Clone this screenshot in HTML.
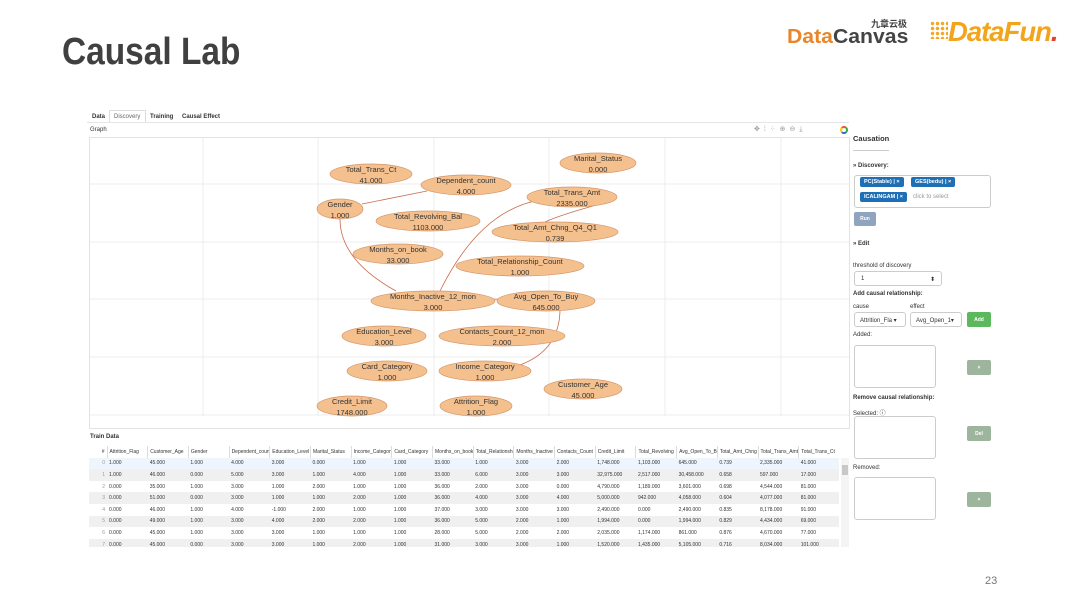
<!DOCTYPE html>
<html><head><meta charset="utf-8"><style>
*{margin:0;padding:0;box-sizing:border-box}
body{width:1080px;height:608px;background:#fff;font-family:"Liberation Sans","DejaVu Sans",sans-serif;position:relative;overflow:hidden;color:#333}
.abs{position:absolute}
.t{font-size:6px;white-space:nowrap}
table{border-collapse:collapse}
td{font-size:5px;height:11.6px;padding:0 2px;white-space:nowrap;overflow:hidden;width:40.7px;max-width:40.7px}
.tag{position:absolute;background:#1f6fb5;color:#fff;font-size:5.5px;font-weight:bold;height:10px;line-height:10px;padding:0 4px;border-radius:2px;white-space:nowrap}
.box{position:absolute;border:1px solid #ccc;border-radius:3px;background:#fff}
.btn{position:absolute;color:#fff;font-size:5px;font-weight:bold;border-radius:2px;display:flex;align-items:center;justify-content:center}
</style></head><body>
<div class="abs" style="left:62px;top:31px;font-size:38px;font-weight:bold;color:#404040;transform:scaleX(0.88);transform-origin:0 0">Causal Lab</div>
<div class="abs" style="left:871px;top:17px;font-size:9px;font-weight:bold;color:#444;font-family:'Noto Sans CJK SC',sans-serif">九章云极</div>
<div class="abs" style="left:787px;top:26px;font-size:20px;font-weight:bold;color:#e8862a;transform:scaleX(1.06);transform-origin:0 0">Data<span style="color:#444">Canvas</span></div>
<div class="abs" style="left:930px;top:21px;width:18px;height:18px;background:radial-gradient(circle,#f5a623 1.5px,transparent 2px) 0 0/5px 5px"></div>
<div class="abs" style="left:948px;top:16px;font-size:28px;font-weight:bold;font-style:italic;color:#f2a51c;letter-spacing:-1px;transform:scaleX(0.98);transform-origin:0 0">DataFun<span style="color:#e0432b">.</span></div>

<div class="abs t" style="left:92px;top:114px;font-weight:bold">Data</div>
<div class="abs" style="left:109px;top:110px;width:37px;height:12px;border:1px solid #ddd;border-bottom:none;background:#fff"></div>
<div class="abs t" style="left:114px;top:114px;color:#666">Discovery</div>
<div class="abs t" style="left:150px;top:114px;font-weight:bold">Training</div>
<div class="abs t" style="left:182px;top:114px;font-weight:bold">Causal Effect</div>
<div class="abs" style="left:87px;top:122px;width:762px;height:1px;background:#e5e5e5"></div>
<div class="abs t" style="left:90px;top:127px">Graph</div>
<div class="abs" style="left:754px;top:125px;font-size:7px;color:#999;letter-spacing:4px">✥⁞⁘⊕⊖⤓</div>
<div class="abs" style="left:840px;top:126px;width:8px;height:8px;border-radius:50%;border:2px solid;border-color:#e53 #3a3 #36c #fc0"></div>

<svg class="abs" style="left:0;top:0" width="1080" height="608">
<rect x="89.5" y="137.5" width="760" height="291" fill="#fff" stroke="#e3e3e3"/>
<g stroke="#ececec">
<line x1="203" y1="138" x2="203" y2="416"/><line x1="318" y1="138" x2="318" y2="416"/><line x1="434" y1="138" x2="434" y2="416"/><line x1="549" y1="138" x2="549" y2="416"/><line x1="665" y1="138" x2="665" y2="416"/><line x1="781" y1="138" x2="781" y2="416"/>
<line x1="90" y1="184" x2="849" y2="184"/><line x1="90" y1="242" x2="849" y2="242"/><line x1="90" y1="299" x2="849" y2="299"/><line x1="90" y1="357" x2="849" y2="357"/><line x1="90" y1="415" x2="849" y2="415"/>
</g>
<g stroke="#c96a4a" fill="none" stroke-width="0.8">
<path d="M427 191 L362 204"/>
<path d="M396 291 Q340 260 340 219"/>
<path d="M440 291 Q480 210 540 200"/>
<path d="M499 299 L479 300"/>
<path d="M560 309 Q560 350 520 365"/>
<path d="M600 204 Q560 215 545 222"/>
</g>
<g font-size="7.5" text-anchor="middle" fill="#333">
<g fill="#f4c08e" stroke="#d4956a" stroke-width="0.7">
<ellipse cx="371" cy="174" rx="41" ry="10"/><ellipse cx="598" cy="163" rx="38" ry="10"/><ellipse cx="466" cy="185" rx="45" ry="10"/><ellipse cx="572" cy="197" rx="45" ry="10"/><ellipse cx="340" cy="209" rx="23" ry="10"/><ellipse cx="428" cy="221" rx="52" ry="10"/><ellipse cx="555" cy="232" rx="63" ry="10"/><ellipse cx="398" cy="254" rx="45" ry="10"/><ellipse cx="520" cy="266" rx="64" ry="10"/><ellipse cx="433" cy="301" rx="62" ry="10"/><ellipse cx="546" cy="301" rx="49" ry="10"/><ellipse cx="384" cy="336" rx="42" ry="10"/><ellipse cx="502" cy="336" rx="63" ry="10"/><ellipse cx="387" cy="371" rx="40" ry="10"/><ellipse cx="485" cy="371" rx="46" ry="10"/><ellipse cx="583" cy="389" rx="39" ry="10"/><ellipse cx="352" cy="406" rx="35" ry="10"/><ellipse cx="476" cy="406" rx="36" ry="10"/>
</g>
<text x="371" y="172">Total_Trans_Ct</text><text x="371" y="183">41.000</text>
<text x="598" y="161">Marital_Status</text><text x="598" y="172">0.000</text>
<text x="466" y="183">Dependent_count</text><text x="466" y="194">4.000</text>
<text x="572" y="195">Total_Trans_Amt</text><text x="572" y="206">2335.000</text>
<text x="340" y="207">Gender</text><text x="340" y="218">1.000</text>
<text x="428" y="219">Total_Revolving_Bal</text><text x="428" y="230">1103.000</text>
<text x="555" y="230">Total_Amt_Chng_Q4_Q1</text><text x="555" y="241">0.739</text>
<text x="398" y="252">Months_on_book</text><text x="398" y="263">33.000</text>
<text x="520" y="264">Total_Relationship_Count</text><text x="520" y="275">1.000</text>
<text x="433" y="299">Months_Inactive_12_mon</text><text x="433" y="310">3.000</text>
<text x="546" y="299">Avg_Open_To_Buy</text><text x="546" y="310">645.000</text>
<text x="384" y="334">Education_Level</text><text x="384" y="345">3.000</text>
<text x="502" y="334">Contacts_Count_12_mon</text><text x="502" y="345">2.000</text>
<text x="387" y="369">Card_Category</text><text x="387" y="380">1.000</text>
<text x="485" y="369">Income_Category</text><text x="485" y="380">1.000</text>
<text x="583" y="387">Customer_Age</text><text x="583" y="398">45.000</text>
<text x="352" y="404">Credit_Limit</text><text x="352" y="415">1748.000</text>
<text x="476" y="404">Attrition_Flag</text><text x="476" y="415">1.000</text>
</g>
</svg>

<div class="abs t" style="left:90px;top:434px;font-weight:bold">Train Data</div>
<div class="abs" style="left:89px;top:446px;width:752px;height:101px;overflow:hidden">
<table id="tb"></table></div>
<div class="abs" style="left:841px;top:458px;width:8px;height:89px;background:#f4f4f4"></div>
<div class="abs" style="left:842px;top:465px;width:6px;height:10px;background:#c8c8c8"></div>

<div class="abs" style="left:853px;top:134px;font-size:7.5px;font-weight:bold">Causation</div>
<div class="abs" style="left:853px;top:150px;width:36px;height:1px;background:#ccc"></div>
<div class="abs t" style="left:853px;top:163px;font-weight:bold">» Discovery:</div>
<div class="box" style="left:854px;top:175px;width:137px;height:33px"></div>
<div class="tag" style="left:860px;top:177px">PC(Stable) | ×</div>
<div class="tag" style="left:911px;top:177px">GES(bedu) | ×</div>
<div class="tag" style="left:860px;top:192px">ICALINGAM | ×</div>
<div class="abs t" style="left:913px;top:194px;color:#999">click to select</div>
<div class="btn" style="left:854px;top:212px;width:22px;height:14px;background:#8fa4be">Run</div>
<div class="abs t" style="left:853px;top:241px;font-weight:bold">» Edit</div>
<div class="abs t" style="left:853px;top:263px">threshold of discovery</div>
<div class="box" style="left:854px;top:271px;width:88px;height:15px;font-size:6px;padding:4px 6px">1<span style="float:right">⬍</span></div>
<div class="abs t" style="left:853px;top:291px;font-weight:bold">Add causal relationship:</div>
<div class="abs t" style="left:853px;top:304px">cause</div><div class="abs t" style="left:910px;top:304px">effect</div>
<div class="box" style="left:854px;top:312px;width:52px;height:15px;font-size:6px;padding:4px 5px">Attrition_Fla ▾</div>
<div class="box" style="left:910px;top:312px;width:52px;height:15px;font-size:6px;padding:4px 5px">Avg_Open_1▾</div>
<div class="btn" style="left:967px;top:312px;width:24px;height:15px;background:#5cb85c">Add</div>
<div class="abs t" style="left:853px;top:332px">Added:</div>
<div class="box" style="left:854px;top:345px;width:82px;height:43px"></div>
<div class="btn" style="left:967px;top:360px;width:24px;height:15px;background:#9db59d">×</div>
<div class="abs t" style="left:853px;top:395px;font-weight:bold">Remove causal relationship:</div>
<div class="abs t" style="left:853px;top:408px">Selected: ⓘ</div>
<div class="box" style="left:854px;top:416px;width:82px;height:43px"></div>
<div class="btn" style="left:967px;top:426px;width:24px;height:15px;background:#9db59d">Del</div>
<div class="abs t" style="left:853px;top:465px">Removed:</div>
<div class="box" style="left:854px;top:477px;width:82px;height:43px"></div>
<div class="btn" style="left:967px;top:492px;width:24px;height:15px;background:#9db59d">×</div>
<div class="abs" style="left:985px;top:575px;font-size:11px;color:#777">23</div>
<script>
var h=["#","Attrition_Flag","Customer_Age","Gender","Dependent_count","Education_Level","Marital_Status","Income_Category","Card_Category","Months_on_book","Total_Relationship","Months_Inactive","Contacts_Count","Credit_Limit","Total_Revolving","Avg_Open_To_Buy","Total_Amt_Chng","Total_Trans_Amt","Total_Trans_Ct"];
var r=[
["1.000","45.000","1.000","4.000","3.000","0.000","1.000","1.000","33.000","1.000","3.000","2.000","1,748.000","1,103.000","645.000","0.739","2,335.000","41.000"],
["1.000","46.000","0.000","5.000","3.000","1.000","4.000","1.000","33.000","6.000","3.000","3.000","32,975.000","2,517.000","30,458.000","0.658","597.000","17.000"],
["0.000","35.000","1.000","3.000","1.000","2.000","1.000","1.000","36.000","2.000","3.000","0.000","4,790.000","1,189.000","3,601.000","0.698","4,544.000","81.000"],
["0.000","51.000","0.000","3.000","1.000","1.000","2.000","1.000","36.000","4.000","3.000","4.000","5,000.000","942.000","4,058.000","0.604","4,077.000","81.000"],
["0.000","46.000","1.000","4.000","-1.000","2.000","1.000","1.000","37.000","3.000","3.000","3.000","2,490.000","0.000","2,490.000","0.835","8,178.000","91.000"],
["0.000","49.000","1.000","3.000","4.000","2.000","2.000","1.000","36.000","5.000","2.000","1.000","1,994.000","0.000","1,994.000","0.829","4,434.000","69.000"],
["0.000","45.000","1.000","3.000","3.000","1.000","1.000","1.000","28.000","5.000","2.000","2.000","2,035.000","1,174.000","861.000","0.876","4,670.000","77.000"],
["0.000","45.000","0.000","3.000","3.000","1.000","2.000","1.000","31.000","3.000","3.000","1.000","1,520.000","1,435.000","5,105.000","0.716","8,034.000","101.000"]];
var s='<tr>';h.forEach(function(x,i){s+='<td style="'+(i==0?'width:18px;max-width:18px;text-align:right;':'border-left:1px solid #ddd;')+'">'+x+'</td>'});s+='</tr>';
r.forEach(function(row,k){var bg=k==0?'#eef5fc':(k%2?'#f0f0f0':'#fff');s+='<tr style="background:'+bg+'"><td style="width:18px;max-width:18px;text-align:right;color:#999">'+k+'</td>';row.forEach(function(c){s+='<td>'+c+'</td>'});s+='</tr>'});
document.getElementById('tb').innerHTML=s;
</script>
</body></html>
